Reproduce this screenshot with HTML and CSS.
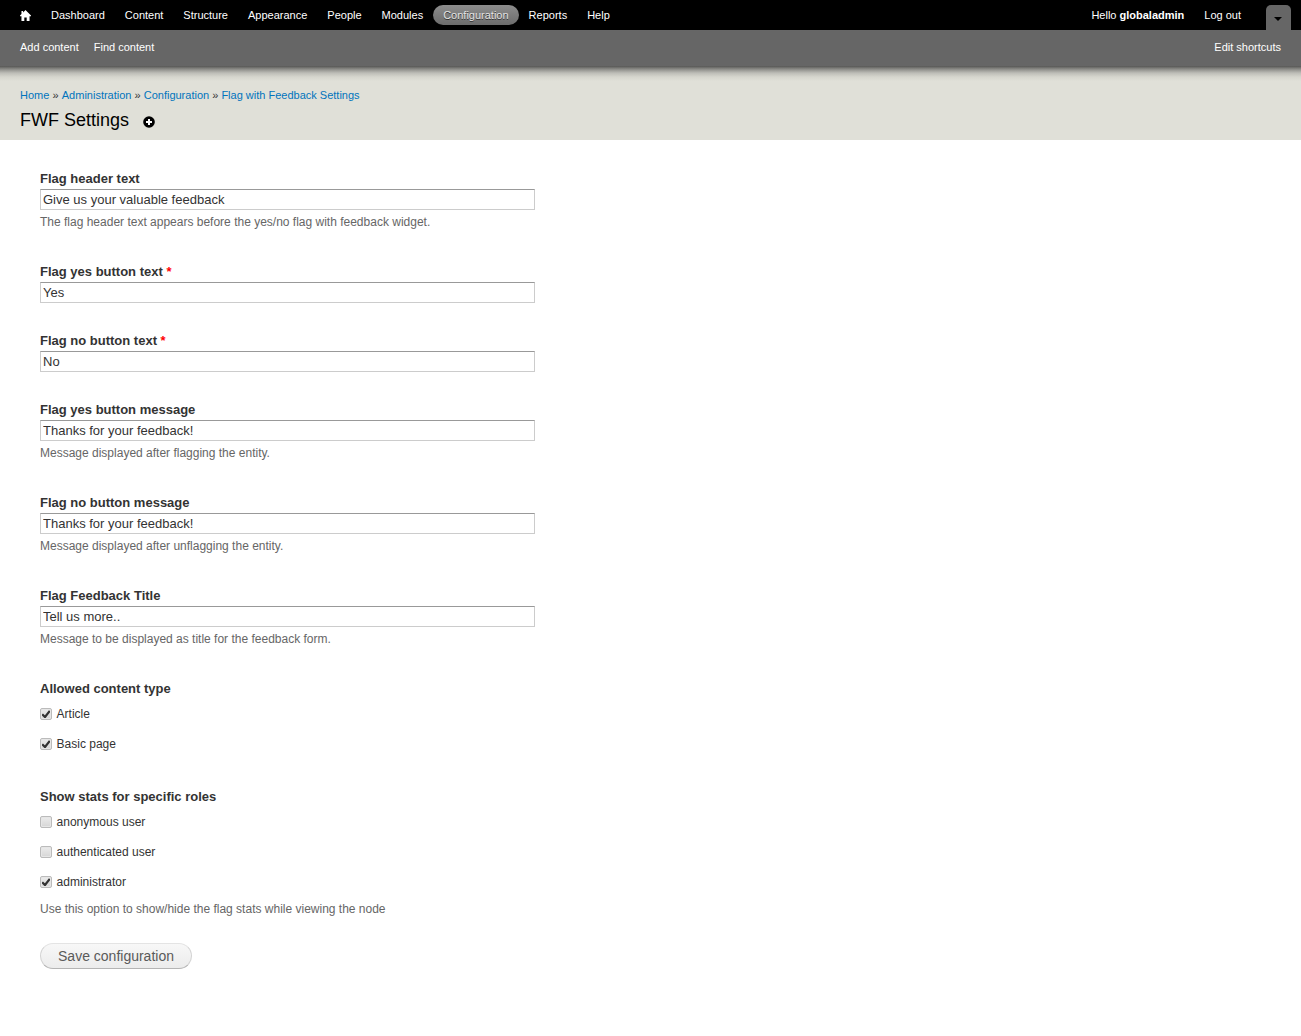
FILE: index.html
```html
<!DOCTYPE html>
<html lang="en">
<head>
<meta charset="utf-8">
<title>FWF Settings</title>
<link rel="stylesheet" href="styles.css">
</head>
<body>
<header class="toolbar">
  <div class="bar-main">
    <nav class="menu">
      <a class="home" href="#" aria-label="Home"><svg width="11" height="11" viewBox="0 0 12 11" preserveAspectRatio="none"><path d="M6 0 L12 5.6 V6.2 H10.4 V11 H7.3 V7.4 H4.7 V11 H1.6 V6.2 H0 V5.6 L1.6 4.1 V1 H3.4 V2.4 Z" fill="#fff"/></svg></a>
      <a href="#">Dashboard</a>
      <a href="#">Content</a>
      <a href="#">Structure</a>
      <a href="#">Appearance</a>
      <a href="#">People</a>
      <a href="#">Modules</a>
      <a class="active" href="#">Configuration</a>
      <a href="#">Reports</a>
      <a href="#">Help</a>
    </nav>
    <div class="user">
      <span>Hello <strong>globaladmin</strong></span>
      <a href="#">Log out</a>
      <button class="toggle" type="button" aria-label="Hide shortcuts"><svg width="8" height="4" viewBox="0 0 8 4"><path d="M0 0 H8 L4 4 Z" fill="#000"/></svg></button>
    </div>
  </div>
  <div class="bar-short">
    <div class="shortcuts">
      <a href="#">Add content</a>
      <a href="#">Find content</a>
    </div>
    <a href="#">Edit shortcuts</a>
  </div>
</header>

<section class="page-head">
  <div class="crumbs"><a href="#">Home</a> » <a href="#">Administration</a> » <a href="#">Configuration</a> » <a href="#">Flag with Feedback Settings</a></div>
  <h1>FWF Settings <a class="add" href="#" aria-label="Add to shortcuts"><svg width="12" height="12" viewBox="0 0 12 12"><circle cx="6" cy="6" r="5.8" fill="#000"/><path d="M5 3 H7 V5 H9 V7 H7 V9 H5 V7 H3 V5 H5 Z" fill="#fff"/></svg></a></h1>
</section>

<main class="content">
  <form class="form">
    <div class="field">
      <label for="f1">Flag header text</label>
      <input id="f1" type="text" value="Give us your valuable feedback">
      <p class="desc">The flag header text appears before the yes/no flag with feedback widget.</p>
    </div>
    <div class="field">
      <label for="f2">Flag yes button text <span class="req">*</span></label>
      <input id="f2" type="text" value="Yes">
    </div>
    <div class="field">
      <label for="f3">Flag no button text <span class="req">*</span></label>
      <input id="f3" type="text" value="No">
    </div>
    <div class="field">
      <label for="f4">Flag yes button message</label>
      <input id="f4" type="text" value="Thanks for your feedback!">
      <p class="desc">Message displayed after flagging the entity.</p>
    </div>
    <div class="field">
      <label for="f5">Flag no button message</label>
      <input id="f5" type="text" value="Thanks for your feedback!">
      <p class="desc">Message displayed after unflagging the entity.</p>
    </div>
    <div class="field">
      <label for="f6">Flag Feedback Title</label>
      <input id="f6" type="text" value="Tell us more..">
      <p class="desc">Message to be displayed as title for the feedback form.</p>
    </div>
    <fieldset class="group">
      <legend>Allowed content type</legend>
      <label class="check"><input type="checkbox" checked> Article</label>
      <label class="check"><input type="checkbox" checked> Basic page</label>
    </fieldset>
    <fieldset class="group">
      <legend>Show stats for specific roles</legend>
      <label class="check"><input type="checkbox"> anonymous user</label>
      <label class="check"><input type="checkbox"> authenticated user</label>
      <label class="check"><input type="checkbox" checked> administrator</label>
      <p class="desc">Use this option to show/hide the flag stats while viewing the node</p>
    </fieldset>
    <button class="save" type="button">Save configuration</button>
  </form>
</main>
</body>
</html>
```

FILE: styles.css
```css
* { box-sizing: border-box; }
html, body { margin: 0; padding: 0; }
body {
  font-family: "Liberation Sans", Arial, sans-serif;
  font-size: 13px;
  line-height: 16px;
  color: #333;
  background: #fff;
  min-height: 1036px;
}
a { text-decoration: none; color: #0074bd; }

.toolbar { font-size: 11px; }
.toolbar a { color: #fff; }
.bar-main {
  height: 30px;
  background: #000;
  display: flex;
  justify-content: space-between;
  align-items: center;
  padding: 0 10px 0 20px;
}
.menu { display: flex; align-items: center; }
.menu a {
  display: block;
  height: 20px;
  line-height: 20px;
  padding: 0 10px;
  border-radius: 10px;
}
.menu a.home {
  display: flex;
  align-items: center;
  padding: 0 10px 0 0;
}
.menu a.active {
  background: linear-gradient(#8c8c8c, #6c6c6c);
  color: #e5e5e5;
  text-shadow: #333 0 1px 0;
}
.user { display: flex; align-self: stretch; align-items: center; color: #fff; }
.user > span { margin-right: 20px; }
.user > a { margin-right: 25px; }
.toggle {
  display: flex;
  align-items: center;
  justify-content: center;
  align-self: flex-end;
  width: 25px;
  height: 25px;
  padding: 2px 1px 0 0;
  border: 0;
  border-radius: 5px 5px 0 0;
  background: #666;
}
.bar-short {
  height: 36px;
  background: #666;
  display: flex;
  justify-content: space-between;
  align-items: center;
  padding: 0 20px 2px;
}
.shortcuts { display: flex; gap: 15px; }

.page-head {
  height: 74px;
  background: linear-gradient(#565654 0, #8a8a86 3px, #bdbdb7 7px, #d6d6ce 11px, #e0e0d8 15px);
  padding: 21px 20px 0;
}
.crumbs { font-size: 11px; line-height: 16px; color: #333; }
.crumbs a:nth-child(2) { margin-left: .2px; }
h1 {
  margin: 5px 0 0;
  font-size: 18px;
  font-weight: 400;
  line-height: 24px;
  color: #000;
}
.add { display: inline-block; margin-left: 9px; vertical-align: -2px; line-height: 0; }

.content { padding: 31px 40px 0; }
.field { padding-bottom: 30px; }
.field label, .group legend {
  display: block;
  font-weight: 700;
  line-height: 16px;
  margin-bottom: 2px;
  color: #333;
}
.field input {
  display: block;
  width: 495px;
  height: 21px;
  padding: 0 2px;
  font: 13px/19px "Liberation Sans", Arial, sans-serif;
  color: #333;
  border: 1px solid #ccc;
  border-top-color: #999;
  background: #fff;
  border-radius: 0;
  outline: 0;
}
.req { color: #f00; }
.desc {
  margin: 0;
  font-size: 12px;
  line-height: 16px;
  color: #666;
}
.field .desc { margin-top: 4px; margin-bottom: 4px; }
.group { border: 0; padding: 0; margin: 0 0 23px; min-width: 0; }
.group legend { padding: 0; margin-bottom: 9px; }
.check {
  display: flex;
  align-items: center;
  gap: 4.6px;
  height: 16px;
  margin-bottom: 14px;
  font-size: 12px;
  color: #333;
}
.check input {
  appearance: none;
  -webkit-appearance: none;
  flex: none;
  width: 12px;
  height: 12px;
  margin: 0;
  border: 1px solid #bbb;
  border-radius: 2px;
  background-color: #e2e2e2;
  background-image: linear-gradient(#ececec, #d6d6d6);
  box-shadow: inset 0 0 0 1px #e6e6e6;
}
.check input:checked {
  background-image: url("data:image/svg+xml,%3Csvg xmlns='http://www.w3.org/2000/svg' width='10' height='10' viewBox='0 0 10 10'%3E%3Cpath d='M1.2 5.2 L4 8 L8.8 1.8' fill='none' stroke='%23333' stroke-width='2.2'/%3E%3C/svg%3E"), linear-gradient(#ececec, #d6d6d6);
  background-position: center;
  background-repeat: no-repeat;
}
.group .desc { margin-top: -3px; }
.save {
  display: block;
  width: 152px;
  height: 26px;
  margin-top: 26px;
  padding: 0;
  font: 14px/24px "Liberation Sans", Arial, sans-serif;
  color: #5a5a5a;
  background: linear-gradient(#f8f8f8, #ececec);
  border: 1px solid #e4e4e4;
  border-color: #e4e4e4 #d2d2d2 #b4b4b4;
  border-radius: 20px;
}
```
